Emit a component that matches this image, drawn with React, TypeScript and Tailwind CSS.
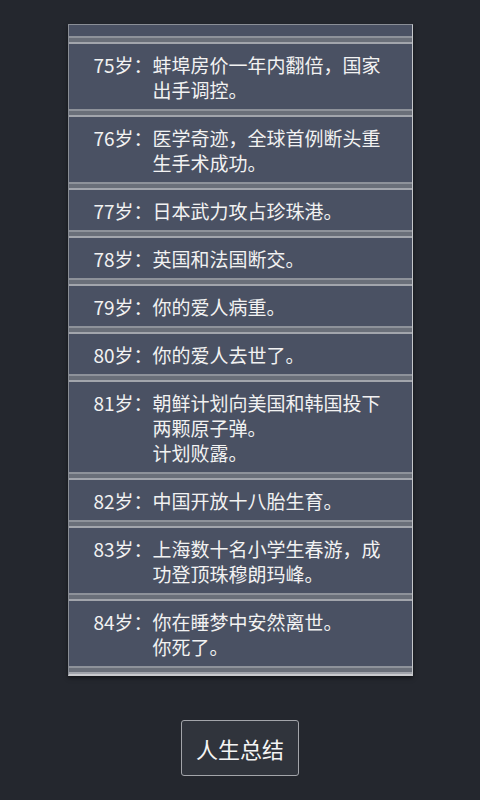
import React from 'react';

type Event = {
  age: number;
  lines: string[];
};

const events: Event[] = [
  { age: 75, lines: ['蚌埠房价一年内翻倍，国家出手调控。'] },
  { age: 76, lines: ['医学奇迹，全球首例断头重生手术成功。'] },
  { age: 77, lines: ['日本武力攻占珍珠港。'] },
  { age: 78, lines: ['英国和法国断交。'] },
  { age: 79, lines: ['你的爱人病重。'] },
  { age: 80, lines: ['你的爱人去世了。'] },
  { age: 81, lines: ['朝鲜计划向美国和韩国投下两颗原子弹。', '计划败露。'] },
  { age: 82, lines: ['中国开放十八胎生育。'] },
  { age: 83, lines: ['上海数十名小学生春游，成功登顶珠穆朗玛峰。'] },
  { age: 84, lines: ['你在睡梦中安然离世。', '你死了。'] },
];

const Separator: React.FC = () => (
  <div className="flex flex-col">
    <div className="h-[2px] bg-[#8e929a]" />
    <div className="h-[4px] bg-[#6a6f79]" />
    <div className="h-[2px] bg-[#a2a5ac]" />
  </div>
);

const Row: React.FC<{ event: Event }> = ({ event }) => (
  <div className="flex bg-[#4a5163] pt-[8px] pb-[7px] text-[19px] leading-[25px] text-[#f2f2f2]">
    <div className="w-[84px] shrink-0 text-right">{event.age}岁：</div>
    <div className="w-[236px]">
      {event.lines.map((line, i) => (
        <div key={i}>{line}</div>
      ))}
    </div>
  </div>
);

export default function App() {
  return (
    <div
      className="flex min-h-[800px] w-full flex-col items-center bg-[#24272e] pt-[24px]"
      style={{ fontFamily: '"Noto Sans CJK SC", "Noto Sans", sans-serif' }}
    >
      <div className="w-[345px] border-t border-l border-[#8a8e96] border-r-[#c4c6ca] border-r border-b-2 border-b-[#c9cacd] bg-[#4a5163] shadow-[0_2px_4px_rgba(0,0,0,0.5)]">
        <div className="h-[11px]" />
        <Separator />
        {events.map((e) => (
          <React.Fragment key={e.age}>
            <Row event={e} />
            <Separator />
          </React.Fragment>
        ))}
      </div>

      <button className="mt-[44px] h-[56px] w-[118px] rounded-[3px] border border-[#a3a5aa] bg-[#30343c] text-[22px] text-[#f4f4f4]">
        人生总结
      </button>
    </div>
  );
}
